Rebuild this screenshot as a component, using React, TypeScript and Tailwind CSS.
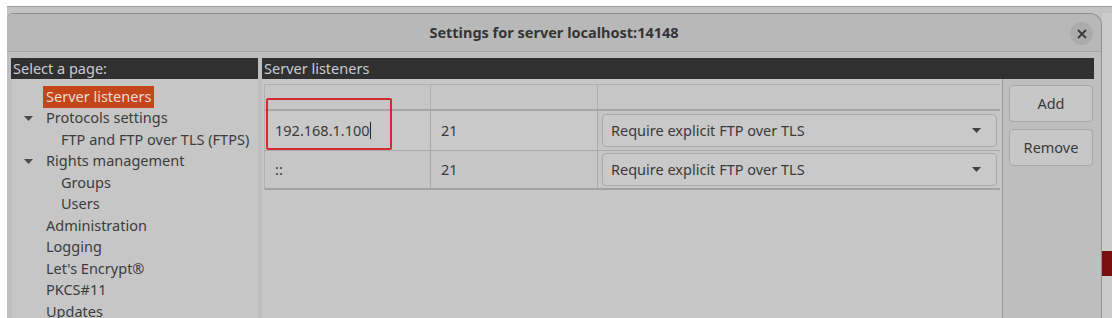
const FONT = { fontFamily: '"Noto Sans", "DejaVu Sans", sans-serif' };

type Node = { label: string; level: number; open?: boolean; selected?: boolean };

const TREE: Node[] = [
  { label: "Server listeners", level: 1, selected: true },
  { label: "Protocols settings", level: 1, open: true },
  { label: "FTP and FTP over TLS (FTPS)", level: 2 },
  { label: "Rights management", level: 1, open: true },
  { label: "Groups", level: 2 },
  { label: "Users", level: 2 },
  { label: "Administration", level: 1 },
  { label: "Logging", level: 1 },
  { label: "Let's Encrypt®", level: 1 },
  { label: "PKCS#11", level: 1 },
  { label: "Updates", level: 1 },
];

function Caret({ className }: { className?: string }) {
  return (
    <svg width="9" height="5" viewBox="0 0 9 5" className={className}>
      <path d="M0 0h9L4.5 5z" fill="currentColor" />
    </svg>
  );
}

function TreeRow({ node }: { node: Node }) {
  return (
    <div className="h-[21.5px] flex items-center">
      <div className="w-[31px] flex justify-end pr-[10px] text-[#4a4a4a]">
        {node.open && <Caret />}
      </div>
      {node.level === 2 && <div className="w-[15px]" />}
      <span
        className={
          node.selected
            ? "h-full flex items-center px-[3px] bg-[#c4451a] text-[#eadbd2]"
            : "h-full flex items-center px-[3px] text-[#3c3c3c]"
        }
      >
        {node.label}
      </span>
    </div>
  );
}

function Combo() {
  return (
    <div className="h-[33px] mx-[4px] rounded-[4px] border border-[#a9a9a9] bg-[#c9c9c9] flex items-center justify-between pl-[8px] pr-[15px] text-[#3a3a3a]">
      <span>Require explicit FTP over TLS</span>
      <Caret className="text-[#404040]" />
    </div>
  );
}

function Button({ children }: { children: React.ReactNode }) {
  return (
    <div className="h-[37px] w-[84px] rounded-[4px] border border-[#a8a8a8] bg-[#c7c7c7] flex items-center justify-center text-[#3a3a3a]">
      {children}
    </div>
  );
}

export default function App() {
  return (
    <div className="w-[1112px] h-[318px] bg-white overflow-hidden text-[14.5px]" style={FONT}>
      <div className="pl-[7px] pt-[6px] h-full">
        <div className="h-full bg-[#c3c3c3] border-t border-[#a0a0a0] pt-[6px] flex">
          {/* dialog */}
          <div className="w-[1095px] h-full bg-[#bebebe] rounded-tr-[12px] rounded-tl-[6px] border-t border-r border-[#8f8f8f] flex flex-col">
            <div className="h-[38px] shrink-0 bg-[#b8b8b8] rounded-tr-[12px] rounded-tl-[6px] border-b border-[#a4a4a4] flex items-center relative">
              <div className="flex-1 text-center font-bold text-[#353535]">
                Settings for server localhost:14148
              </div>
              <div className="absolute right-[8px] top-[8px] w-[23px] h-[23px] rounded-full bg-[#ababab] flex items-center justify-center text-[#3a3a3a]">
                <svg width="10" height="10" viewBox="0 0 10 10">
                  <path d="M1 1l8 8M9 1l-8 8" stroke="currentColor" strokeWidth="1.8" />
                </svg>
              </div>
            </div>

            <div className="flex-1 flex pt-[6px] pl-[4px] pr-[7px] gap-[4px] min-h-0">
              {/* left: page tree */}
              <div className="w-[247px] flex flex-col">
                <div className="h-[21px] bg-[#303030] text-[#c8ccd2] pl-[2px] flex items-center">
                  Select a page:
                </div>
                <div className="flex-1 bg-[#c6c6c6] ml-[1px] pt-[7px]">
                  {TREE.map((n) => (
                    <TreeRow key={n.label} node={n} />
                  ))}
                </div>
              </div>

              {/* right: listeners */}
              <div className="flex-1 flex flex-col">
                <div className="h-[21px] bg-[#303030] text-[#c8ccd2] pl-[2px] flex items-center">
                  Server listeners
                </div>
                <div className="flex-1 flex">
                  <div className="w-[741px] bg-[#c6c6c6] border-r border-[#9c9c9c] pt-[5px] pl-[2px]">
                    <div className="w-[736px] border-t border-l border-[#b0b0b0]">
                      <div className="grid grid-cols-[166px_167px_403px] h-[26px] border-b-2 border-[#a6a6a6]">
                        <div className="border-r border-[#b0b0b0]" />
                        <div className="border-r border-[#b0b0b0]" />
                        <div />
                      </div>
                      <div className="grid grid-cols-[166px_167px_403px] h-[40px] border-b border-[#a9a9a9] text-[#3a3a3a]">
                        <div className="relative border-r border-[#a9a9a9] flex items-center pl-[10px] bg-[#c9c9c9]">
                          <span>192.168.1.100</span>
                          <span className="w-[1px] h-[17px] bg-[#222]" />
                          <div className="absolute left-[1px] top-[-13px] w-[126px] h-[52px] border-2 border-[#d62a2a] rounded-[2px]" />
                        </div>
                        <div className="border-r border-[#a9a9a9] flex items-center pl-[10px] bg-[#c9c9c9]">
                          21
                        </div>
                        <div className="flex flex-col justify-center">
                          <Combo />
                        </div>
                      </div>
                      <div className="grid grid-cols-[166px_167px_403px] h-[39px] border-b-2 border-[#a3a3a3] text-[#3a3a3a]">
                        <div className="border-r border-[#a9a9a9] flex items-center pl-[10px]">::</div>
                        <div className="border-r border-[#a9a9a9] flex items-center pl-[10px]">21</div>
                        <div className="flex flex-col justify-center">
                          <Combo />
                        </div>
                      </div>
                    </div>
                  </div>
                  <div className="flex-1 flex flex-col items-center pt-[6px] gap-[7px] pl-[5px]">
                    <Button>Add</Button>
                    <Button>Remove</Button>
                  </div>
                </div>
              </div>
            </div>
          </div>

          {/* background window peeking out */}
          <div className="flex-1 bg-[#cbcbcb] flex flex-col">
            <div className="h-[238px]" />
            <div className="h-[25px] bg-[#7a0f0f]" />
          </div>
        </div>
      </div>
    </div>
  );
}
